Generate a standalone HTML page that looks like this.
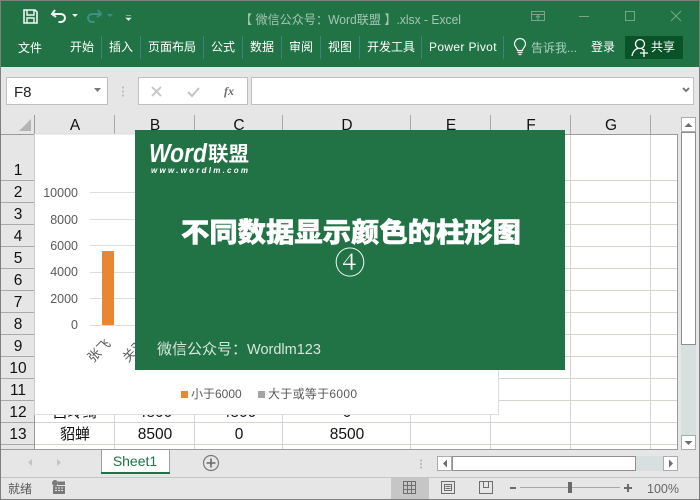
<!DOCTYPE html>
<html><head><meta charset="utf-8"><style>
html,body{margin:0;padding:0;background:#e6e6e6;width:700px;height:500px;overflow:hidden}
svg{display:block}
text{font-family:"Liberation Sans","Noto Sans CJK SC",sans-serif}
</style></head><body>
<svg width="700" height="500" viewBox="0 0 700 500" xmlns="http://www.w3.org/2000/svg">
<rect width="700" height="500" fill="#e6e6e6"/>
<!-- ribbon -->
<rect x="0" y="0" width="700" height="67" fill="#217346"/>
<g fill="none" stroke="#f2f7f4" stroke-width="1.600">
<path d="M24 10h11l2 2v11H24z"/><path d="M27 10v5h7v-5M27 23v-5h7v5" stroke-width="1.400"/>
<path d="M55 10l-3 4 4 3M52.500 14h8c6 0 6 8 0 8h-2" stroke-width="2"/>
</g>
<path d="M72 14h6l-3 3z" fill="#f2f7f4"/>
<g fill="none" stroke="#3f8f88" stroke-width="2"><path d="M98 10l3 4-4 3M100.500 14h-8c-6 0-6 8 0 8h2"/></g>
<path d="M107 14h6l-3 3z" fill="#3f8f88"/>
<path d="M126 15.500h5M126 18h5l-2.500 2.500z" fill="#e8f0ec" stroke="#e8f0ec" stroke-width=".6"/>
<text x="240" y="24" font-size="12.500" fill="#a5c5b3" textLength="221" lengthAdjust="spacingAndGlyphs">【 微信公众号：Word联盟 】.xlsx - Excel</text>
<g fill="none" stroke="#77a58c" stroke-width="1">
<path d="M531.500 11.500h13v9h-13zM531.500 14.500h13M538 20v-4M536 17.500l2-2 2 2"/>
<path d="M579 16.500h10"/>
<rect x="625.500" y="11.500" width="9" height="9"/>
<path d="M671 11l10 10M681 11l-10 10"/>
</g>
<g font-size="12" fill="#fff">
<text x="18" y="52">文件</text>
<text x="70" y="51">开始</text>
<text x="109" y="51">插入</text>
<text x="148" y="51">页面布局</text>
<text x="211" y="51">公式</text>
<text x="250" y="51">数据</text>
<text x="289" y="51">审阅</text>
<text x="328" y="51">视图</text>
<text x="367" y="51">开发工具</text>
<text x="429" y="51" letter-spacing=".35">Power Pivot</text>
<text x="531" y="52" fill="#a9d0bf">告诉我...</text>
<text x="591" y="51">登录</text>
</g>
<g stroke="#3e8384" stroke-width="1">
<path d="M101.500 36v23M140.500 36v23M203.500 36v23M242.500 36v23M281.500 36v23M320.500 36v23M359.500 36v23M421.500 36v23M503.500 36v23"/>
</g>
<g fill="none" stroke="#eef5f1" stroke-width="1.200">
<path d="M517.500 50.500c0-2.500-3-3.500-3-6.500a5.500 5.500 0 0 1 11 0c0 3-3 4-3 6.500z"/>
<path d="M517.500 52.500h5M518.500 54.500h3"/>
</g>
<rect x="625" y="36" width="58" height="23" fill="#0a5328"/>
<g fill="none" stroke="#fff" stroke-width="1.300">
<circle cx="640" cy="44" r="4.500"/><path d="M632 56c1-5 3-7 6-7.500M642 49l2 1"/><path d="M640 53h8M644 49v8"/>
</g>
<text x="651" y="51" font-size="12" fill="#fff">共享</text>
<!-- formula bar -->
<rect x="6.500" y="77.500" width="101" height="27" fill="#fff" stroke="#c0c0c0"/>
<text x="14" y="97" font-size="15" fill="#222">F8</text>
<path d="M94 88h7l-3.500 4z" fill="#7a7a7a"/>
<path d="M123 86.500v2M123 90.500v2M123 94.500v2" stroke="#b4b4b4" stroke-width="1.600"/>
<rect x="138.500" y="77.500" width="109" height="27" fill="#fff" stroke="#c0c0c0"/>
<path d="M152 87l9 9M161 87l-9 9" stroke="#c4c4c4" stroke-width="1.800" fill="none"/>
<path d="M188 92l4 4 7-8" stroke="#c4c4c4" stroke-width="2" fill="none"/>
<text x="224" y="95" font-size="12" font-style="italic" font-weight="bold" fill="#6e6e6e" style="font-family:'Liberation Serif',serif">fx</text>
<rect x="251.500" y="77.500" width="442" height="27" fill="#fff" stroke="#c0c0c0"/>
<path d="M683 88l3 3 3-3" stroke="#6e6e6e" stroke-width="1.800" fill="none"/>
<!-- sheet -->
<rect x="35" y="134" width="643" height="315" fill="#fff"/>
<g stroke="#d6d5cc" stroke-width="1" fill="none">
<path d="M35 180.500H677M35 202.500H677M35 224.500H677M35 246.500H677M35 268.500H677M35 290.500H677M35 312.500H677M35 334.500H677M35 356.500H677M35 378.500H677M35 400.500H677M35 422.500H677M35 444.500H677"/>
<path d="M114.500 134V449M194.500 134V449M282.500 134V449M410.500 134V449M490.500 134V449M570.500 134V449M650.500 134V449"/>
</g>
<!-- headers -->
<g stroke="#a9a9a9" stroke-width="1">
<path d="M0 180.500H34M0 202.500H34M0 224.500H34M0 246.500H34M0 268.500H34M0 290.500H34M0 312.500H34M0 334.500H34M0 356.500H34M0 378.500H34M0 400.500H34M0 422.500H34M0 444.500H34"/>
<path d="M114.500 115V134M194.500 115V134M282.500 115V134M410.500 115V134M490.500 115V134M570.500 115V134M650.500 115V134"/>
</g>
<path d="M34.500 115V449M0 134.500H677.500V449M0 449.500H678" stroke="#9c9a9a" stroke-width="1" fill="none"/>
<path d="M19 131h12v-12z" fill="#b4b4b4"/>
<g font-size="15.500" fill="#111" text-anchor="middle">
<text x="75" y="130">A</text><text x="155" y="130">B</text><text x="239" y="130">C</text><text x="347" y="130">D</text><text x="451" y="130">E</text><text x="531" y="130">F</text><text x="611" y="130">G</text>
<text x="18" y="175">1</text><text x="18" y="197">2</text><text x="18" y="219">3</text><text x="18" y="241">4</text><text x="18" y="263">5</text><text x="18" y="285">6</text><text x="18" y="307">7</text><text x="18" y="329">8</text><text x="18" y="351">9</text><text x="18" y="373">10</text><text x="18" y="395">11</text><text x="18" y="417">12</text><text x="18" y="439">13</text>
<text x="75" y="417" font-size="15">吕玲绮</text><text x="155" y="417">4800</text><text x="239" y="417">4800</text><text x="347" y="417">0</text>
<text x="75" y="439" font-size="15">貂蝉</text><text x="155" y="439">8500</text><text x="239" y="439">0</text><text x="347" y="439">8500</text>
</g>
<!-- chart -->
<rect x="35" y="134" width="463.500" height="280.500" fill="#fff" stroke="#d9dede"/>
<path d="M35 134v281" stroke="#fff"/>
<g stroke="#d9dede"><path d="M90 192.500h60M90 219.500h60M90 245.500h60M90 272.500h60M90 298.500h60M90 325.500h60"/></g>
<g font-size="12.500" fill="#595959" text-anchor="end">
<text x="78" y="197">10000</text><text x="78" y="224">8000</text><text x="78" y="250">6000</text><text x="78" y="276">4000</text><text x="78" y="303">2000</text><text x="78" y="329">0</text>
</g>
<rect x="102" y="251" width="12" height="74" fill="#e98632"/>
<g font-size="13" fill="#595959">
<text transform="translate(93,363) rotate(-45)">张飞</text>
<text transform="translate(128,363) rotate(-45)">关羽</text>
</g>
<rect x="181" y="391" width="7" height="7" fill="#e98632"/>
<text x="191" y="398" font-size="12" fill="#595959">小于6000</text>
<rect x="258" y="391" width="7" height="7" fill="#a5a5a5"/>
<text x="268" y="398" font-size="12" fill="#595959" textLength="89">大于或等于6000</text>
<!-- overlay -->
<rect x="135" y="130" width="430" height="240" fill="#217346"/>
<text x="149" y="162" font-size="25.500" font-weight="bold" font-style="italic" fill="#fff" textLength="58" lengthAdjust="spacingAndGlyphs">Word</text>
<text x="208" y="161" font-size="20.500" font-weight="bold" fill="#fff">联盟</text>
<text x="151" y="173" font-size="8" font-weight="bold" font-style="italic" fill="#fff" textLength="97">www.wordlm.com</text>
<text x="351" y="242" font-size="27" font-weight="900" fill="#fff" stroke="#fff" stroke-width=".5" text-anchor="middle" textLength="340" lengthAdjust="spacingAndGlyphs" style="font-family:'Noto Sans CJK SC',sans-serif">不同数据显示颜色的柱形图</text>
<text x="350" y="274" font-size="31" fill="#fff" text-anchor="middle" style="font-family:'Noto Serif CJK SC',serif;font-weight:300">④</text>
<text x="157" y="354" font-size="15" fill="#d6e5dc">微信公众号：<tspan font-size="14.500">Wordlm123</tspan></text>
<!-- v scrollbar -->
<rect x="681" y="132" width="15" height="317" fill="#d8dfdf"/>
<rect x="681.500" y="117.500" width="14" height="14" fill="#fff" stroke="#ababab"/>
<path d="M684.500 127h8l-4-4z" fill="#6e6e6e"/>
<rect x="681.500" y="132.500" width="14" height="212" fill="#fff" stroke="#8f8f8f"/>
<rect x="681.500" y="435.500" width="14" height="14" fill="#fff" stroke="#ababab"/>
<path d="M684.500 441h8l-4 4z" fill="#6e6e6e"/>
<!-- sheet tabs -->
<path d="M32 459l-4 3.500 4 3.500zM57 459l4 3.500-4 3.500z" fill="#c4c4c4"/>
<path d="M101.500 449.500V474M169.500 449.500V474" stroke="#a0a0a0"/>
<rect x="102" y="450" width="67" height="24" fill="#fff"/>
<rect x="101" y="472" width="69" height="2" fill="#217346"/>
<text x="135" y="466" font-size="14" fill="#217346" text-anchor="middle">Sheet1</text>
<circle cx="211" cy="463" r="7.500" fill="none" stroke="#7a7a7a" stroke-width="1.200"/>
<path d="M206.500 463h9M211 458.500v9" stroke="#6a6a6a" stroke-width="1.600"/>
<path d="M421 459.500v2M421 463v2M421 466.500v2" stroke="#b4b4b4" stroke-width="1.600"/>
<!-- h scrollbar -->
<rect x="437" y="456" width="241" height="15" fill="#d8dfdf"/>
<rect x="437.500" y="456.500" width="14" height="14" fill="#fff" stroke="#ababab"/>
<path d="M447 459.500v8l-4-4z" fill="#6e6e6e"/>
<rect x="452.500" y="456.500" width="183" height="14" fill="#fff" stroke="#8f8f8f"/>
<rect x="663.500" y="456.500" width="14" height="14" fill="#fff" stroke="#ababab"/>
<path d="M669 459.500v8l4-4z" fill="#6e6e6e"/>
<!-- status -->
<path d="M0 477.500H700" stroke="#c4c4c4"/>
<text x="8" y="493" font-size="12" fill="#555">就绪</text>
<circle cx="55" cy="483" r="3" fill="#7a7a7a"/>
<path d="M58 481.500h7v3.500h-7zM53 486h12v8H53z" fill="#7a7a7a"/>
<path d="M55 488h2M58 488h2M61 488h2M55 490.500h2M58 490.500h2M61 490.500h2" stroke="#e6e6e6" stroke-width="1"/>
<rect x="391" y="478" width="38" height="21" fill="#c6c6c6"/>
<g fill="none" stroke="#6e6e6e" stroke-width="1">
<path d="M403.500 481.500h12v12h-12zM403.500 485.500h12M403.500 489.500h12M407.500 481.500v12M411.500 481.500v12"/>
<path d="M441.500 481.500h13v12h-13zM444.500 484.500h7v6h-7zM445.500 486.500h5M445.500 488.500h5"/>
<path d="M479.500 481.500h13v12h-13zM483.500 481.500v6h5v-6"/>
</g>
<path d="M510 488h6" stroke="#6a6a6a" stroke-width="2"/>
<path d="M520 487.500h100" stroke="#a8a8a8"/>
<rect x="568" y="482" width="4" height="11" fill="#6a6a6a"/>
<path d="M624 488h8M628 484v8" stroke="#6a6a6a" stroke-width="2"/>
<text x="679" y="493" font-size="12.500" fill="#666" text-anchor="end">100%</text>
<!-- window border -->
<rect x=".5" y=".5" width="699" height="499" fill="none" stroke="#7f7f7f"/>
</svg>
</body></html>
